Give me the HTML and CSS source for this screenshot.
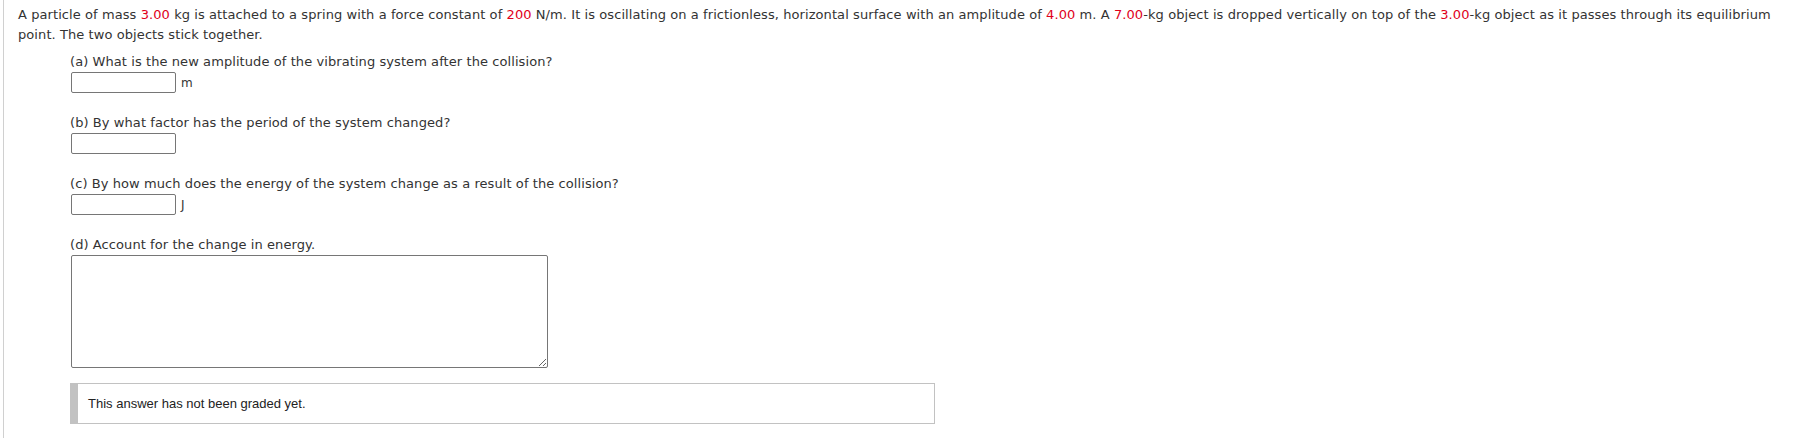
FILE: index.html
```html
<!DOCTYPE html>
<html>
<head>
<meta charset="utf-8">
<link rel="stylesheet" href="styles.css">
</head>
<body>
<div class="page">
  <p class="question">A particle of mass <span class="var">3.00</span> kg is attached to a spring with a force constant of <span class="var">200</span> N/m. It is oscillating on a frictionless, horizontal surface with an amplitude of <span class="var">4.00</span> m. A <span class="var">7.00</span>-kg object is dropped vertically on top of the <span class="var">3.00</span>-kg object as it passes through its equilibrium point. The two objects stick together.</p>
  <div class="parts">
    <div class="part">
      <div class="label">(a) What is the new amplitude of the vibrating system after the collision?</div>
      <div class="answer"><input class="box" type="text"><span class="unit">m</span></div>
    </div>
    <div class="part">
      <div class="label">(b) By what factor has the period of the system changed?</div>
      <div class="answer"><input class="box" type="text"></div>
    </div>
    <div class="part">
      <div class="label">(c) By how much does the energy of the system change as a result of the collision?</div>
      <div class="answer"><input class="box" type="text"><span class="unit">J</span></div>
    </div>
    <div class="part part-last">
      <div class="label">(d) Account for the change in energy.</div>
      <textarea class="essay"></textarea>
      <div class="graded">This answer has not been graded yet.</div>
    </div>
  </div>
</div>
</body>
</html>
```
FILE: styles.css
```css
html, body {
  margin: 0;
  padding: 0;
  background: #fff;
}
.page {
  margin-left: 3px;
  border-left: 1px solid #d0d0d0;
  min-height: 438px;
  box-sizing: border-box;
  padding: 5px 0 0 14px;
  font-family: "DejaVu Sans", Verdana, sans-serif;
  font-size: 13px;
  line-height: 20px;
  letter-spacing: 0.08px;
  color: #333;
}
.question {
  margin: 0 0 7px 0;
  width: 1770px;
}
.var {
  color: #e0001a;
}
.parts {
  margin-left: 52px;
}
.part {
  margin-bottom: 20px;
}
.label {
  line-height: 20px;
}
.answer {
  display: flex;
  align-items: center;
  height: 21px;
}
.box {
  box-sizing: border-box;
  width: 105px;
  height: 21px;
  margin: 0 0 0 1px;
  border: 1px solid #767676;
  border-radius: 2px;
  padding: 1px 2px;
  font-family: "DejaVu Sans", sans-serif;
  font-size: 13px;
  background: #fff;
}
.unit {
  margin-left: 5px;
  font-size: 12px;
}
.essay {
  display: block;
  box-sizing: border-box;
  width: 477px;
  height: 113px;
  margin: 0 0 0 1px;
  border: 1px solid #767676;
  border-radius: 2px;
  padding: 2px;
  font-family: "DejaVu Sans", sans-serif;
  font-size: 13px;
}
.graded {
  margin-top: 15px;
  box-sizing: border-box;
  width: 865px;
  height: 41px;
  border: 1px solid #c2c2c2;
  border-left: 8px solid #c2c2c2;
  padding-left: 10px;
  display: flex;
  align-items: center;
  font-family: "Liberation Sans", Arial, sans-serif;
  font-size: 13px;
  letter-spacing: 0;
  color: #222;
}
```
